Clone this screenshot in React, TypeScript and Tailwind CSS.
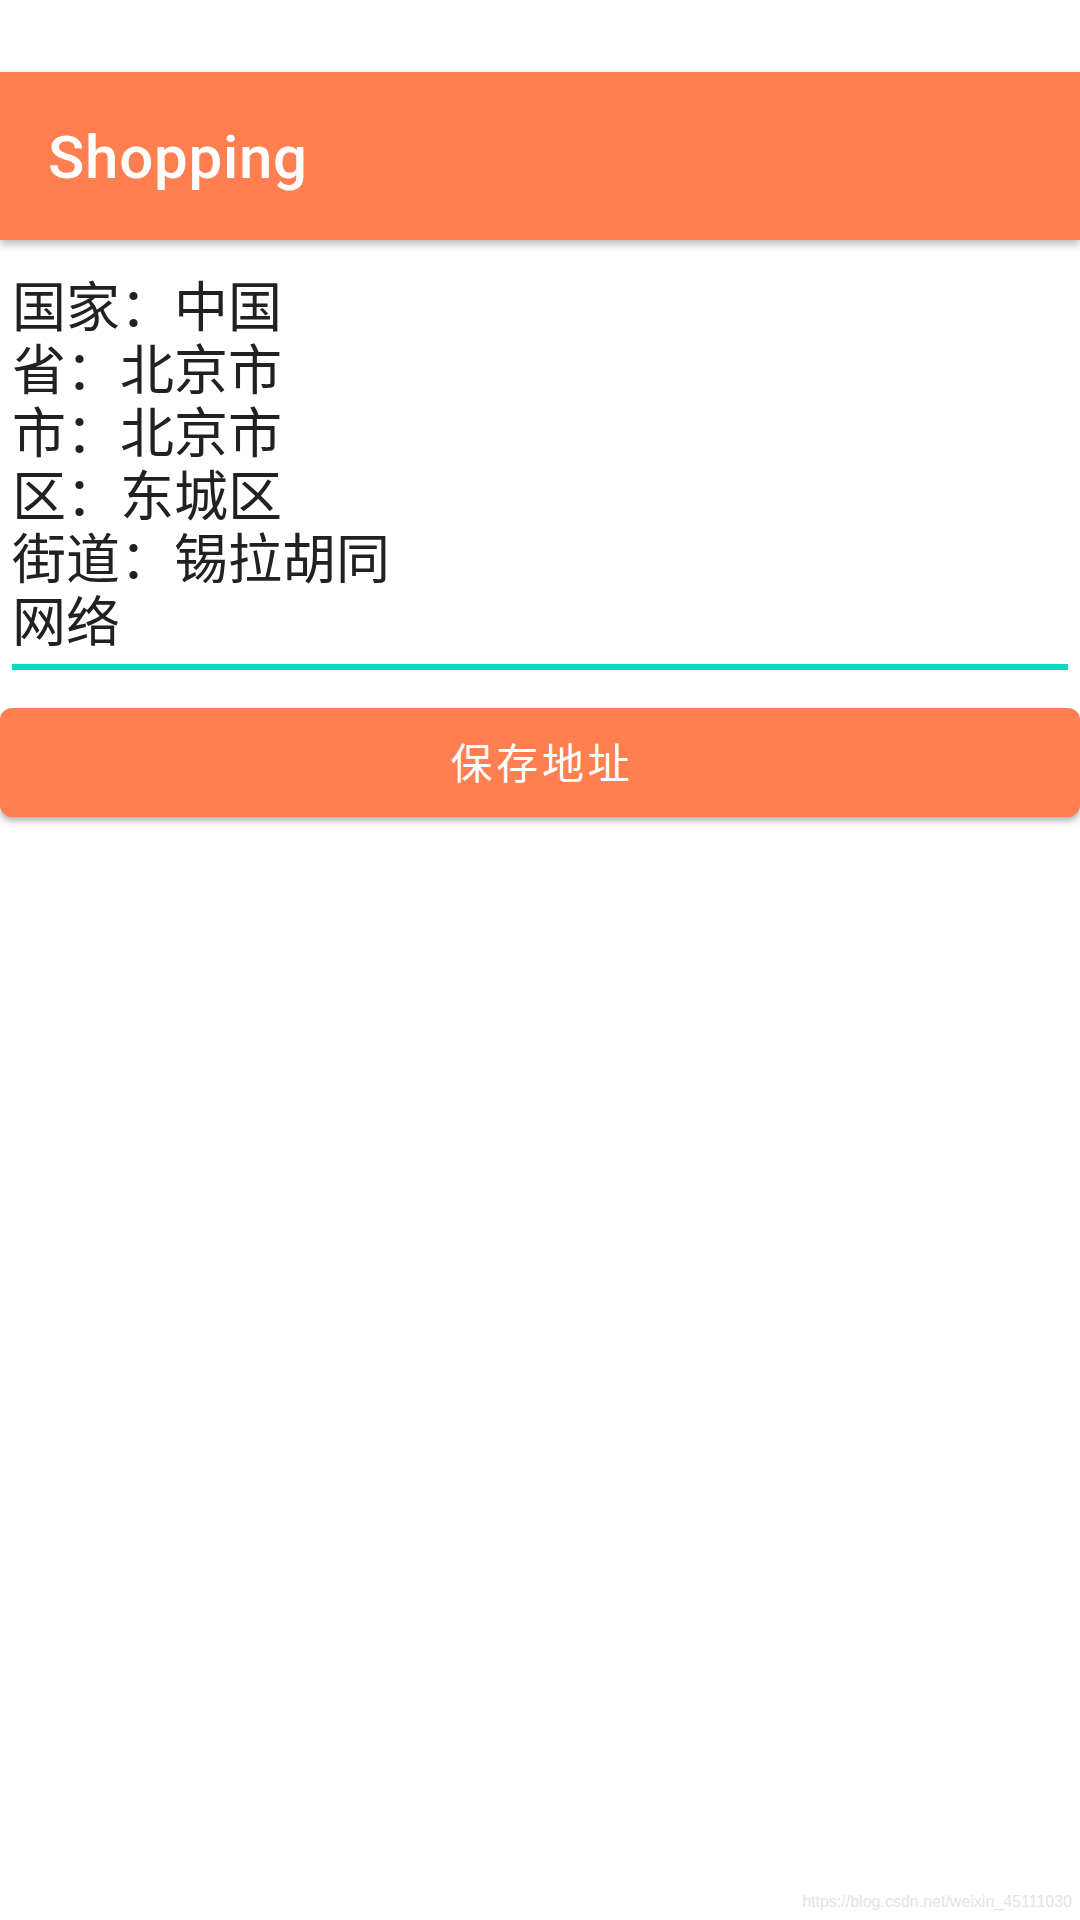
export default function App() {
  const lines = ["国家：中国", "省：北京市", "市：北京市", "区：东城区", "街道：锡拉胡同", "网络"];
  return (
    <div className="relative h-[1920px] w-[1080px] overflow-hidden bg-white">
      <div className="h-[72px] bg-white" />
      <header className="relative z-10 flex h-[168px] items-center bg-[#ff7f50] pl-[48px] pt-[4px] shadow-[0_4px_8px_rgba(0,0,0,0.28)]">
        <h1 className="font-['Roboto',sans-serif] text-[60px] font-medium leading-none tracking-[0.0125em] text-white">Shopping</h1>
      </header>
      <div className="mx-[12px] pt-[37px]">
        <div className="font-['Roboto','Noto_Sans_CJK_SC',sans-serif] text-[54px] leading-[63px] text-[#212121]">
          {lines.map((l, i) => (
            <div key={i}>{l}</div>
          ))}
        </div>
        <div className="mt-[9px] h-[6px] bg-[#03dac5]" />
      </div>
      <button className="mt-[38px] flex h-[109px] w-full items-center justify-center rounded-[12px] bg-[#ff7f50] pt-[4px] pl-[4px] font-['Roboto','Noto_Sans_CJK_SC',sans-serif] text-[42px] tracking-[0.09em] text-white shadow-[0_4px_6px_rgba(0,0,0,0.3)]">
        保存地址
      </button>
      <div className="absolute bottom-[6px] right-[8px] font-['Liberation_Sans',Arial,sans-serif] text-[16px] text-[#e3e3e3]">
        https://blog.csdn.net/weixin_45111030
      </div>
    </div>
  );
}
